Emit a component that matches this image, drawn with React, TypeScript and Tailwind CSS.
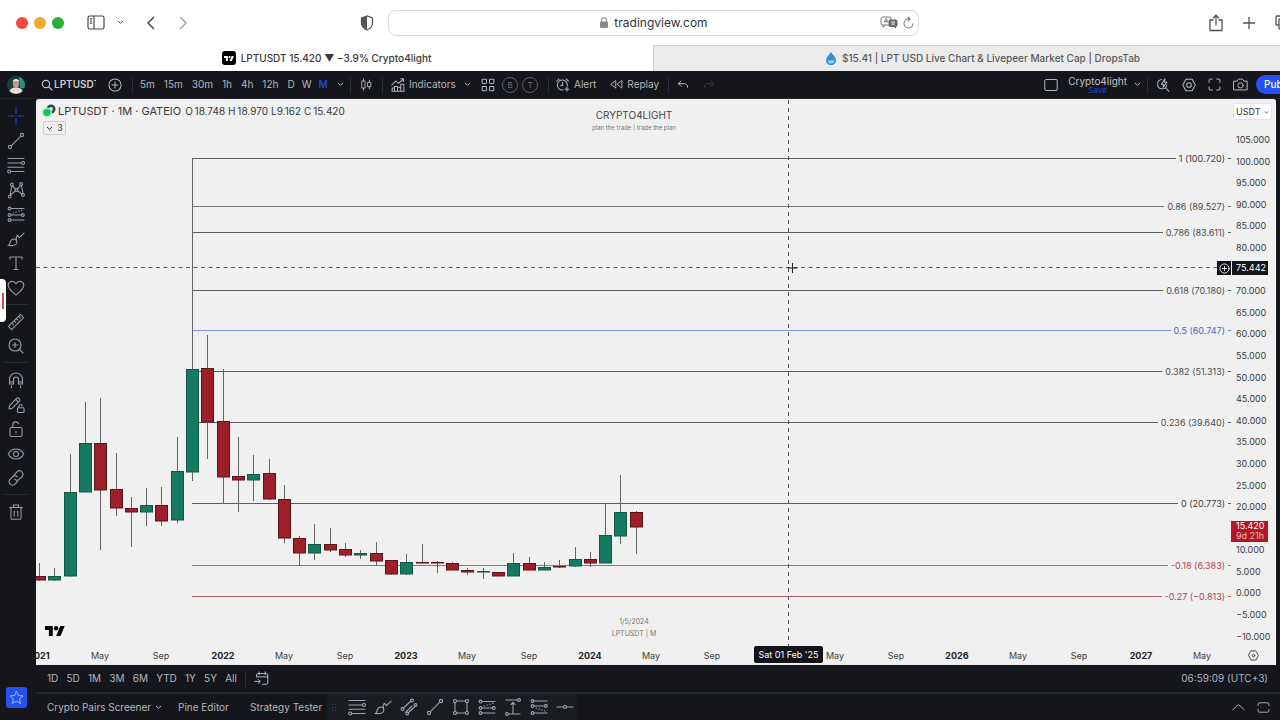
import React from "react";

type Tone = "up" | "down";
type Candle = [high: number, top: number, bottom: number, low: number, tone: Tone];

const ORIGIN_X = 36;
const ORIGIN_Y = 99;
const STEP = 15.3;
const FIRST_X = 39;

const yOf = (price: number) => Math.floor(139.7 + (105 - price) * 4.3217 - ORIGIN_Y);

const candles: Candle[] = [
  [563, 576, 580, 581, "down"],
  [568, 576, 580, 581, "up"],
  [454, 492, 576, 577, "up"],
  [402, 443, 492, 492, "up"],
  [398, 443, 490, 550, "down"],
  [453, 489, 508, 516, "down"],
  [497, 508, 512, 547, "down"],
  [488, 505, 512, 526, "up"],
  [487, 505, 521, 526, "down"],
  [437, 471, 520, 523, "up"],
  [158, 369, 472, 481, "up"],
  [335, 368, 422, 459, "down"],
  [369, 421, 477, 504, "down"],
  [437, 476, 480, 512, "down"],
  [455, 474, 480, 501, "up"],
  [459, 473, 499, 500, "down"],
  [485, 499, 538, 543, "down"],
  [536, 538, 553, 566, "down"],
  [524, 544, 553, 560, "up"],
  [528, 544, 550, 552, "down"],
  [543, 549, 555, 557, "down"],
  [550, 553, 555, 559, "up"],
  [542, 553, 561, 566, "down"],
  [560, 560, 574, 575, "down"],
  [554, 562, 574, 575, "up"],
  [544, 562, 563, 563, "down"],
  [561, 562, 563, 573, "down"],
  [562, 563, 570, 570, "down"],
  [568, 570, 572, 575, "down"],
  [568, 571, 572, 579, "up"],
  [572, 572, 576, 576, "down"],
  [553, 563, 576, 576, "up"],
  [557, 563, 570, 570, "down"],
  [562, 567, 570, 570, "up"],
  [560, 566, 567, 568, "down"],
  [547, 559, 566, 567, "up"],
  [552, 559, 563, 567, "down"],
  [503, 535, 563, 563, "up"],
  [475, 512, 536, 544, "up"],
  [511, 512, 527, 554, "down"],
];

const fibs: { level: string; price: number; color: string; text: string }[] = [
  { level: "1", price: 100.72, color: "#5c5c5c", text: "text-[#3c3c3c]" },
  { level: "0.86", price: 89.527, color: "#747474", text: "text-[#4c4c4c]" },
  { level: "0.786", price: 83.611, color: "#5c5c5c", text: "text-[#4c4c4c]" },
  { level: "0.618", price: 70.18, color: "#5c5c5c", text: "text-[#4c4c4c]" },
  { level: "0.5", price: 60.747, color: "#7d93ee", text: "text-[#4f64c8]" },
  { level: "0.382", price: 51.313, color: "#5c5c5c", text: "text-[#4c4c4c]" },
  { level: "0.236", price: 39.64, color: "#5c5c5c", text: "text-[#4c4c4c]" },
  { level: "0", price: 20.773, color: "#5c5c5c", text: "text-[#3c3c3c]" },
  { level: "-0.18", price: 6.383, color: "#c2606a", text: "text-[#ad4450]" },
  { level: "-0.27", price: -0.813, color: "#b5606a", text: "text-[#a34450]" },
];

const fmt = (n: number) => n.toFixed(3).replace("-", "−");
const prices = Array.from({ length: 24 }, (_, i) => 105 - i * 5);

const times = [
  "2021", "May", "Sep", "2022", "May", "Sep", "2023", "May", "Sep", "2024",
  "May", "Sep", "", "May", "Sep", "2026", "May", "Sep", "2027", "May",
];

function Ico({
  size = 18,
  sw = 1.1,
  className = "",
  children,
}: {
  size?: number;
  sw?: number;
  className?: string;
  children: React.ReactNode;
}) {
  return (
    <svg
      width={size}
      height={size}
      viewBox="0 0 18 18"
      fill="none"
      stroke="currentColor"
      strokeWidth={sw}
      strokeLinecap="round"
      strokeLinejoin="round"
      className={`shrink-0 ${className}`}
      aria-hidden="true"
    >
      {children}
    </svg>
  );
}

const Chevron = ({ className = "" }: { className?: string }) => (
  <svg width="7" height="5" viewBox="0 0 7 5" fill="none" stroke="currentColor" strokeWidth="1" className={`shrink-0 ${className}`} aria-hidden="true">
    <path d="M1 1l2.5 2.4L6 1" />
  </svg>
);

const TrendLine = (
  <>
    <circle cx="3" cy="15" r="1.6" />
    <circle cx="15" cy="3" r="1.6" />
    <path d="M4.2 13.8L13.8 4.2" />
  </>
);
const FibLines = (
  <>
    <path d="M1 2.5h16M1 7h13.5M1 11.2h16M3.6 15.5H17" />
    <circle cx="16" cy="7" r="1.5" />
    <circle cx="2.2" cy="15.5" r="1.5" />
  </>
);
const Pattern = (
  <>
    <path d="M3 14.5L4.8 4.8M5.6 4.8l3 3.4M10.4 8.2l3-3.8M14.4 4.4l1.6 8.4M3.6 14.2l5-4.6M10.4 9.6l4.6 3.6" />
    <circle cx="2.7" cy="15.6" r="1.4" />
    <circle cx="4.9" cy="3.5" r="1.4" />
    <circle cx="9.4" cy="9" r="1.4" />
    <circle cx="14.2" cy="3" r="1.4" />
    <circle cx="16" cy="14" r="1.4" />
  </>
);
const Position = (
  <>
    <path d="M4 3.5h13M4 10h10.5M4 15h13" />
    <path d="M6 8.200l9-3" strokeDasharray=".5 2.500" />
    <circle cx="2.5" cy="3.5" r="1.4" />
    <circle cx="2.5" cy="10" r="1.4" />
    <circle cx="15.8" cy="10" r="1.4" />
    <circle cx="2.5" cy="15" r="1.4" />
  </>
);
const Brush = (
  <>
    <path d="M1 15.500c2.400-.2 1.600-2.400 2.600-4.400 1.200-2.300 4.200-2.700 5.600-1 1.400 1.800.4 4.600-2 5.200-1.800.5-4 .3-6.200.2z" />
    <path d="M9.400 10.200c-.5-2 .2-4 .8-5 1 .2 1.700 1.600 2 2.600L17 3.200" />
  </>
);

const drawTools: { name: string; icon: React.ReactNode; active?: boolean }[] = [
  { name: "Cross", icon: <path d="M9 1v5.500M9 11.500V17M1 9h5.500M11.500 9H17M9 8.700v.6" />, active: true },
  { name: "Trend line", icon: TrendLine },
  { name: "Fib retracement", icon: FibLines },
  { name: "Patterns", icon: Pattern },
  { name: "Forecasting", icon: Position },
  { name: "Brush", icon: Brush },
  { name: "Text", icon: <path d="M3 5V3h12v2M9 3v12.500M7 15.500h4" /> },
  { name: "Icons", icon: <path d="M9 16C5 12.800 1.200 9.800 1.200 6.200 1.200 2 6.800 1 9 4.800 11.200 1 16.800 2 16.800 6.200 16.800 9.800 13 12.800 9 16z" /> },
];

const measureTools: { name: string; icon: React.ReactNode }[] = [
  { name: "Measure", icon: <path d="M1.400 13.400L13.400 1.400l3.200 3.200L4.600 16.600zM5 10l1.600 1.600M7.200 7.800l1.600 1.600M9.400 5.600L11 7.200M11.600 3.400L13.200 5" /> },
  { name: "Zoom in", icon: (<><circle cx="8" cy="8" r="6" /><path d="M12.500 12.500l3.500 3.500M8 5.600v4.800M5.600 8h4.800" /></>) },
];

const stateTools: { name: string; icon: React.ReactNode }[] = [
  { name: "Magnet", icon: <path d="M2.500 13V8.500a6.500 6.500 0 0 1 13 0V13h-4V8.500a2.500 2.500 0 0 0-5 0V13zM2.500 11h4M11.500 11h4M4.500 14.800v1.800M13.500 14.800v1.800" /> },
  { name: "Keep drawing", icon: (<><path d="M2 13l.5-3.300L10 2.200c1.300-1 3.800 1.300 2.600 2.700L5 12.400zM8.800 3.500l2.600 2.600" /><rect x="10.500" y="11.800" width="6.500" height="4.700" rx=".6" /><path d="M12 11.600v-1.500c0-2 3-2 3.200-.2" /></>) },
  { name: "Lock all drawings", icon: (<><rect x="3" y="7.500" width="12" height="9" rx="1.200" /><path d="M5.800 7.300V4.500c0-3.400 5-3.400 5.800-.7M9 11v2" /></>) },
  { name: "Hide all drawings", icon: (<><path d="M1.200 9c3.700-6.600 11.900-6.600 15.600 0-3.700 6.600-11.900 6.600-15.600 0z" /><circle cx="9" cy="9" r="2.500" /></>) },
  { name: "Sync drawings", icon: <path d="M7.500 5.500l2.800-2.800c3-2.800 7.400 1.500 4.800 4.800l-2.700 2.700c-1.300 1.200-3.400 1.200-4.600 0M10.500 12.500l-2.800 2.800C4.700 18 .3 13.800 2.900 10.500L5.600 7.800c1.300-1.200 3.400-1.200 4.600 0" /> },
];

const favTools: { name: string; icon: React.ReactNode }[] = [
  { name: "Fib levels", icon: FibLines },
  { name: "Paint", icon: Brush },
  { name: "Parallel channel", icon: (<><path d="M3.500 10l7.500-7M8 15l7.500-7M6 14l6-6" /><circle cx="2.500" cy="11" r="1.400" /><circle cx="12" cy="2.500" r="1.400" /><circle cx="7.200" cy="15.500" r="1.400" /><circle cx="15.500" cy="7" r="1.400" /></>) },
  { name: "Line", icon: TrendLine },
  { name: "Rectangle", icon: (<><rect x="3" y="3" width="12" height="12" /><g fill="#1a1c22"><circle cx="3" cy="3" r="1.500" /><circle cx="15" cy="3" r="1.500" /><circle cx="3" cy="15" r="1.500" /><circle cx="15" cy="15" r="1.500" /></g></>) },
  { name: "Long position", icon: Position },
  { name: "Price range", icon: (<><path d="M2 2h11M5 16h11M9 4.500V16M7 6.500l2-2.200 2 2.200" /><circle cx="15" cy="2" r="1.400" /><circle cx="3" cy="16" r="1.400" /></>) },
  { name: "Short position", icon: (<><path d="M4 3h13M4 8h10.500M4 15h13" /><path d="M6 10l9 3" strokeDasharray=".5 2.500" /><circle cx="2.500" cy="3" r="1.400" /><circle cx="2.500" cy="8" r="1.400" /><circle cx="15.800" cy="8" r="1.400" /><circle cx="2.500" cy="15" r="1.400" /></>) },
  { name: "Horizontal line", icon: (<><path d="M1 9h6.500M10.500 9H17" /><circle cx="9" cy="9" r="1.500" /></>) },
];

const TvMark = ({ className }: { className: string }) => (
  <svg viewBox="0 4 36 18" className={className} fill="currentColor" aria-hidden="true">
    <path d="M14 22H7V11H0V4h14v18zM28 22h-8l7.500-18h8L28 22z" />
    <circle cx="20" cy="8" r="4" />
  </svg>
);

function BrowserChrome() {
  return (
    <header className="bg-white text-[#4a4a4a]">
      <div className="flex h-[45px] items-center">
        <div className="flex flex-1 items-center pl-4">
          <div className="flex gap-[6px]">
            <button aria-label="Close" className="size-3 rounded-full bg-[#f4473f]" />
            <button aria-label="Minimize" className="size-3 rounded-full bg-[#f5a62c]" />
            <button aria-label="Full screen" className="size-3 rounded-full bg-[#25b237]" />
          </div>
          <button aria-label="Sidebar" className="ml-[23px] flex items-center">
            <svg width="18" height="15" viewBox="0 0 18 15" fill="none" stroke="currentColor" strokeWidth="1.200" aria-hidden="true">
              <rect x="1" y="1" width="16" height="13" rx="1.800" />
              <path d="M7 1v13M2.800 3.800h2.400M2.800 6h2.400M2.800 8.200h2.400" />
            </svg>
          </button>
          <button aria-label="Tab groups" className="ml-3"><Chevron /></button>
          <button aria-label="Back" className="ml-5">
            <svg width="12" height="16" viewBox="0 0 12 16" fill="none" stroke="currentColor" strokeWidth="1.500" aria-hidden="true"><path d="M10 2L4 8l6 6" /></svg>
          </button>
          <button aria-label="Forward" className="ml-5 text-[#a6a6a6]">
            <svg width="12" height="16" viewBox="0 0 12 16" fill="none" stroke="currentColor" strokeWidth="1.500" aria-hidden="true"><path d="M4 2l6 6-6 6" /></svg>
          </button>
          <button aria-label="Privacy report" className="mr-1 ml-auto">
            <svg width="14" height="16" viewBox="0 0 14 16" aria-hidden="true">
              <path d="M7 1L1.500 3v5c0 3.400 2.500 5.700 5.500 7 3-1.300 5.500-3.600 5.500-7V3z" fill="none" stroke="#555" strokeWidth="1.200" />
              <path d="M7 1L1.500 3v5c0 3.400 2.500 5.700 5.500 7z" fill="#555" />
            </svg>
          </button>
        </div>
        <div className="ml-[10px] flex h-[26px] w-[531px] items-center rounded-lg border border-[#dcdcdc] bg-white pr-1 pl-2">
          <span className="w-8" />
          <div className="flex flex-1 items-center justify-center gap-[6px] text-[12px] text-[#333]">
            <svg width="8" height="11" viewBox="0 0 8 11" aria-hidden="true">
              <rect x="0" y="4.500" width="8" height="6.500" rx="1" fill="#8a8a8a" />
              <path d="M1.700 5V3c0-3 4.600-3 4.600 0v2" fill="none" stroke="#8a8a8a" strokeWidth="1.100" />
            </svg>
            <span>tradingview.com</span>
          </div>
          <button aria-label="Translate">
            <svg width="18" height="13" viewBox="0 0 18 13" fill="none" aria-hidden="true">
              <rect x="1" y="1" width="10" height="8" rx="2" stroke="#777" />
              <path d="M3 9v2.500L5.500 9M4 7l2-4.500L8 7M4.700 5.500h2.600" stroke="#777" strokeWidth=".9" />
              <rect x="8.500" y="3.500" width="9" height="7.500" rx="2" fill="#666" />
              <path d="M14 10.500l2 2.200v-2.500z" fill="#666" />
              <path d="M11 6h4M13 5v1M11.300 9c2-.5 3-1.500 3.200-3M14.700 9c-1.600-.4-2.500-1.500-3-3" stroke="#fff" strokeWidth=".7" />
            </svg>
          </button>
          <button aria-label="Reload" className="ml-[5px]">
            <svg width="11" height="13" viewBox="0 0 11 13" fill="none" stroke="#777" strokeWidth="1.100" aria-hidden="true">
              <path d="M6.500 3H5.500a4.500 4.500 0 1 0 4.500 4.500M4.700.7L7 3 4.700 5.300" />
            </svg>
          </button>
        </div>
        <div className="flex flex-1 justify-end overflow-hidden">
          <div className="-mr-[9px] flex items-center gap-5 text-[#555]">
            <button aria-label="Share">
              <svg width="14" height="18" viewBox="0 0 14 18" fill="none" stroke="currentColor" strokeWidth="1.300" aria-hidden="true"><path d="M4.500 6H1v10.500h12V6H9.500M7 11.500V1.500M4 4.200l3-3 3 3" /></svg>
            </button>
            <button aria-label="New tab">
              <svg width="12" height="12" viewBox="0 0 12 12" fill="none" stroke="currentColor" strokeWidth="1.300" aria-hidden="true"><path d="M6 0v12M0 6h12" /></svg>
            </button>
            <button aria-label="Tab overview">
              <svg width="14" height="15" viewBox="0 0 14 15" fill="none" stroke="currentColor" strokeWidth="1.300" aria-hidden="true"><rect x="1" y="1" width="9" height="9" rx="1" /><rect x="4" y="4" width="9" height="10" rx="1" fill="#fff" /></svg>
            </button>
          </div>
        </div>
      </div>
      <nav className="flex h-[26px] text-[10px] font-medium" aria-label="Tabs">
        <a href="#chart" className="flex w-[653px] items-center justify-center gap-[5px] text-[#3a3a3a]">
          <span className="flex size-[14px] items-center justify-center rounded-[3px] bg-black text-white"><TvMark className="h-[5px] w-[10px]" /></span>
          LPTUSDT 15.420 ▼ −3.9% Crypto4light
        </a>
        <a href="#droptab" className="flex flex-1 items-center justify-center gap-[6px] border-t border-l border-[#cfcfcf] bg-[#ebebeb] pl-8 text-[#5a5a5a]">
          <svg width="10" height="13" viewBox="0 0 10 13" aria-hidden="true">
            <path d="M5 0C3 3 0 5.500 0 8.400 0 11 2.200 13 5 13s5-2 5-4.600C10 5.500 7 3 5 0z" fill="#2c8fdc" />
            <path d="M1.500 8c2 1.500 4-.8 7 .6-.3 4-6.500 4.200-7-.6z" fill="#9ed6fb" />
          </svg>
          $15.41 | LPT USD Live Chart &amp; Livepeer Market Cap | DropsTab
        </a>
      </nav>
    </header>
  );
}

const Sep = () => <span className="h-4 w-px shrink-0 bg-[#2c2e36]" />;

function TopBar() {
  return (
    <div className="flex h-7 items-center overflow-hidden border-b border-[#25272e] text-[10px] whitespace-nowrap text-[#b4b6bd]">
      <div className="flex w-[132px] shrink-0 items-center pl-[7px]">
        <button aria-label="Account">
          <svg width="18" height="18" viewBox="0 0 18 18" aria-hidden="true">
            <clipPath id="face"><circle cx="9" cy="9" r="9" /></clipPath>
            <g clipPath="url(#face)">
              <rect width="18" height="18" fill="#123f44" />
              <path d="M12 0h6v12h-5z" fill="#2a8f86" />
              <path d="M2 18c0-5 3-6.500 7-6.500s7 1.500 7 6.500z" fill="#e9dcd4" />
              <ellipse cx="9" cy="8" rx="3" ry="4" fill="#c99a86" />
              <path d="M5.500 6C6 2 12 2 12.500 6 11 4.500 7 4.500 5.500 6z" fill="#e9e9e9" />
            </g>
          </svg>
        </button>
        <button className="ml-4 flex items-center gap-px font-semibold text-[#c8cad0]">
          <Ico size={12} sw={1.700}><circle cx="7.500" cy="7.500" r="5.500" /><path d="M12 12l4.500 4.500" /></Ico>
          <span className="w-[42px] overflow-hidden text-left">LPTUSDT</span>
        </button>
        <button aria-label="Compare" className="ml-3">
          <Ico size={14} sw={1.300}><circle cx="9" cy="9" r="7.800" /><path d="M9 5.200v7.600M5.200 9h7.600" /></Ico>
        </button>
      </div>
      <Sep />
      <div className="flex w-[217px] shrink-0 items-center gap-[9px] pl-[7px]">
        {["5m", "15m", "30m", "1h", "4h", "12h"].map((t) => (
          <button key={t}>{t}</button>
        ))}
        <div className="flex items-center gap-[7px]">
          <button>D</button>
          <button>W</button>
          <button className="font-semibold text-[#2448c8]">M</button>
        </div>
        <button aria-label="More intervals"><Chevron /></button>
      </div>
      <Sep />
      <button aria-label="Bar style" className="flex w-[31px] shrink-0 justify-center">
        <Ico size={13} sw={1.300}><rect x="3" y="4" width="4" height="10" /><path d="M5 1v3M5 14v3M13 3v3M13 12v3" /><rect x="11" y="6" width="4" height="6" /></Ico>
      </button>
      <Sep />
      <div className="flex w-[165px] shrink-0 items-center pl-2">
        <button className="flex items-center gap-1">
          <Ico size={14} sw={1.300}><path d="M1 9l5-5 4 3 6-6M12.500 1H16v3.500M1.500 17v-4h3v4M4.500 17v-6h4v6M8.500 17v-5h4v5M12.500 17V8h4v9zM1 17h16" /></Ico>
          Indicators
        </button>
        <button aria-label="Favorite indicators" className="mr-[10px] ml-auto"><Chevron /></button>
        <button aria-label="Templates">
          <Ico size={14} sw={1.300}><rect x="1.500" y="1.500" width="5.500" height="5.500" rx=".8" /><rect x="11" y="1.500" width="5.500" height="5.500" rx=".8" /><rect x="1.500" y="11" width="5.500" height="5.500" rx=".8" /><rect x="11" y="11" width="5.500" height="5.500" rx=".8" /></Ico>
        </button>
        <button className="ml-[7px] flex size-4 items-center justify-center rounded-full border border-[#5a5c64] text-[8px] text-[#6e7078]">B</button>
        <button className="mr-[10px] ml-1 flex size-4 items-center justify-center rounded-full border border-[#5a5c64] text-[8px] text-[#6e7078]">T</button>
      </div>
      <Sep />
      <div className="flex w-[119px] shrink-0 items-center pl-[7px]">
        <button className="flex items-center gap-1">
          <Ico size={14} sw={1.300}><path d="M14.500 10.500A6.500 6.500 0 1 0 9 15.500M8.500 5.500v4H6M1 4l3-3M13 1l3 3M14 12v5M11.500 14.500h5" /></Ico>
          Alert
        </button>
        <button className="ml-[14px] flex items-center gap-1">
          <Ico size={13} sw={1.300}><path d="M8 4v10L1.500 9zM16.500 4v10L10 9z" /></Ico>
          Replay
        </button>
      </div>
      <Sep />
      <div className="flex items-center gap-[14px] pl-[8px]">
        <button aria-label="Undo"><Ico size={12} sw={1.500}><path d="M6 3L2 7l4 4M2 7h9c3 0 5 2 5 5.500" /></Ico></button>
        <button aria-label="Redo" className="text-[#33353d]"><Ico size={12} sw={1.500}><path d="M12 3l4 4-4 4M16 7H7c-3 0-5 2-5 5.500" /></Ico></button>
      </div>
      <div className="-mr-[30px] ml-auto flex shrink-0 items-center">
        <button aria-label="Layout" className="mr-[10px]"><Ico size={14} sw={1.300}><rect x="1" y="2" width="16" height="14" rx="2" /></Ico></button>
        <button className="flex flex-col items-center pt-px">
          <span className="text-[10px] leading-[10px] text-[#c0c2c8]">Crypto4light</span>
          <span className="text-[8px] leading-[8px] text-[#2448c8]">Save</span>
        </button>
        <button aria-label="Manage layouts" className="mr-[6px] ml-[7px]"><Chevron /></button>
        <Sep />
        <div className="ml-2 flex items-center gap-3">
          <button aria-label="Quick search"><Ico size={14} sw={1.300}><path d="M7 2a6 6 0 1 0 7 7M12 12.500l4.500 4.500M11.500 1L7 8h3l-1 4 5-6.500h-3z" /></Ico></button>
          <button aria-label="Settings"><Ico size={14} sw={1.300}><path d="M5 1.500h8L17 9l-4 7.500H5L1 9z" /><circle cx="9" cy="9" r="3" /></Ico></button>
          <button aria-label="Fullscreen"><Ico size={13} sw={1.400}><path d="M1.500 6V3.500a2 2 0 0 1 2-2H6M12 1.500h2.500a2 2 0 0 1 2 2V6M16.500 12v2.500a2 2 0 0 1-2 2H12M6 16.500H3.500a2 2 0 0 1-2-2V12" /></Ico></button>
          <button aria-label="Snapshot"><Ico size={15} sw={1.200}><path d="M1 5h4l1.500-2.500h5L13 5h4v10.500H1z" /><circle cx="9" cy="10" r="3.200" /></Ico></button>
        </div>
        <button className="ml-2 h-[19px] w-[54px] rounded-full bg-[#2451f0] pl-2 text-left text-[10px] font-medium text-white">Publish</button>
      </div>
    </div>
  );
}

function ToolList({ items, className }: { items: { name: string; icon: React.ReactNode; active?: boolean }[]; className: string }) {
  return (
    <div className={`flex flex-col items-center justify-between ${className}`}>
      {items.map((t) => (
        <button key={t.name} aria-label={t.name} className={t.active ? "text-[#2346c4]" : "text-[#9a9ca4]"}>
          <Ico>{t.icon}</Ico>
        </button>
      ))}
    </div>
  );
}

function SideBar() {
  return (
    <aside className="relative flex w-9 shrink-0 flex-col items-center pt-2 pr-1">
      <ToolList items={drawTools} className="h-[190px]" />
      <span className="mt-[7px] h-px w-6 bg-[#2c2e36]" />
      <ToolList items={measureTools} className="mt-[8px] h-[42px]" />
      <span className="mt-[7px] h-px w-6 bg-[#2c2e36]" />
      <ToolList items={stateTools} className="mt-[8px] h-[116px]" />
      <span className="mt-[7px] h-px w-6 bg-[#2c2e36]" />
      <ToolList
        items={[{ name: "Remove objects", icon: <path d="M2.500 4.500h13M6.500 4.500V2h5v2.500M4 4.500V15c0 .8.500 1.300 1.300 1.300h7.400c.8 0 1.300-.5 1.300-1.300V4.500M7.300 8v5M10.700 8v5" /> }]}
        className="mt-[8px] h-[18px]"
      />
      <button aria-label="Favorites toolbar" className="mt-auto mb-[12px] flex size-[21px] items-center justify-center rounded-[3px] bg-[#2451f0] text-[#a9bcff]">
        <Ico size={15}><path d="M9 1.500l2.300 5 5.400.6-4 3.700 1.100 5.400L9 13.500l-4.800 2.700 1.100-5.400-4-3.700 5.400-.6z" /></Ico>
      </button>
      <span className="absolute top-[180px] left-0 flex h-[43px] w-[6px] items-center justify-center rounded-r-[4px] bg-white">
        <span className="h-4 w-[2px] bg-[#cf4a4e]" />
      </span>
    </aside>
  );
}

function Plot() {
  return (
    <div className="relative h-[547px] min-w-0 flex-1 overflow-hidden">
      <svg width="100%" height="100%" className="block" aria-label="LPTUSDT monthly candles">
        {fibs.map((f) => {
          const y = yOf(f.price) + 0.5;
          return <line key={f.level} x1={156} x2="100%" y1={y} y2={y} stroke={f.color} />;
        })}
        {candles.map(([high, top, bottom, low, tone], i) => {
          const cx = Math.round(FIRST_X + i * STEP - ORIGIN_X);
          return (
            <g key={i}>
              <line x1={cx + 0.5} x2={cx + 0.5} y1={high - ORIGIN_Y} y2={low - ORIGIN_Y} stroke="#646464" />
              <rect
                x={cx - 5.5}
                y={top - ORIGIN_Y + 0.5}
                width={12}
                height={Math.max(bottom - top - 0.5, 0.5)}
                fill={tone === "up" ? "#167a60" : "#9d1f2a"}
                stroke={tone === "up" ? "#0f5a47" : "#5e1219"}
              />
            </g>
          );
        })}
        <line x1="0" x2="100%" y1="168.500" y2="168.500" stroke="#555" strokeDasharray="4 3.500" />
        <line x1="752.500" x2="752.500" y1="1" y2="547" stroke="#555" strokeDasharray="4 4" />
        <path d="M756.500 164v10M751.500 169h10" stroke="#222" />
      </svg>

      {fibs.map((f) => (
        <span
          key={f.level}
          className={`absolute right-[3px] -translate-y-1/2 bg-[#f0f0f0] px-[3px] text-[9px] leading-3 whitespace-nowrap ${f.text}`}
          style={{ top: yOf(f.price) + 1 }}
        >
          {f.level} ({fmt(f.price)})
        </span>
      ))}
      <button aria-label="Add alert at price" className="absolute top-[162px] right-0 flex h-[14px] w-[14px] items-center justify-center bg-[#131419] text-white">
        <Ico size={11} sw={1.400}><circle cx="9" cy="9" r="7.500" /><path d="M9 5.500v7M5.500 9h7" /></Ico>
      </button>

      <div className="absolute top-[5px] left-[6px] text-[#3a3a3a]">
        <div className="flex h-[14px] items-center whitespace-nowrap">
          <svg width="14" height="14" viewBox="0 0 14 14" aria-hidden="true">
            <circle cx="9" cy="5" r="4.500" fill="#264b52" />
            <circle cx="9" cy="5" r="2" fill="#d7e5e3" />
            <circle cx="5" cy="8.500" r="5" fill="#a5ecc2" />
            <circle cx="5" cy="8.500" r="3.600" fill="#19c15b" />
          </svg>
          <span className="ml-[2px] text-[11px]">LPTUSDT · 1M · GATEIO</span>
          <span className="ml-1 flex gap-[3px] text-[10px]">
            <span>O&thinsp;18.748</span>
            <span>H&thinsp;18.970</span>
            <span>L9.162</span>
            <span>C&thinsp;15.420</span>
          </span>
        </div>
        <button className="mt-[3px] ml-px flex h-[14px] w-[23px] items-center justify-center gap-1 rounded-[2px] border border-[#cfd0d4] text-[9px]">
          <Chevron /> 3
        </button>
      </div>

      <div className="absolute top-[10px] left-[598px] flex -translate-x-1/2 flex-col items-center whitespace-nowrap">
        <span className="text-[10px] leading-3 text-[#444]">CRYPTO4LIGHT</span>
        <span className="mt-[3px] text-[6px] leading-2 text-[#777]">plan the trade | trade the plan</span>
      </div>
      <div className="absolute top-[517px] left-[598px] flex -translate-x-1/2 flex-col items-center text-[7px] leading-3 whitespace-nowrap text-[#777]">
        <span>1/5/2024</span>
        <span>LPTUSDT | M</span>
      </div>
      <TvMark className="absolute top-[527px] left-[9px] h-[10px] w-[20px] text-black" />
    </div>
  );
}

function PriceAxis() {
  return (
    <div className="relative w-11 shrink-0 text-[9px] text-[#3c3c3c]">
      <label className="sr-only" htmlFor="currency">Currency</label>
      <div className="relative mt-1 ml-[2px] h-[17px] w-[39px] rounded-[2px] border border-[#e2e2e2] bg-white">
        <select id="currency" className="block h-full w-full appearance-none bg-transparent pl-[2px] text-[9px] leading-[15px] text-[#333]">
          <option>USDT</option>
        </select>
        <Chevron className="pointer-events-none absolute top-[6px] right-px scale-75" />
      </div>
      <ul className="mt-[14px] flex h-[509px] flex-col justify-between pl-[5px] leading-3">
        {prices.map((p) => (
          <li key={p}>{p === 75 || p === 15 ? "\u00a0" : fmt(p)}</li>
        ))}
      </ul>
      <span className="absolute top-[162px] left-px h-[14px] w-9 bg-[#131419] pl-1 leading-[14px] text-white">75.442</span>
      <span className="absolute top-[422px] left-0 flex h-[21px] w-[37px] flex-col bg-[#b01825] pl-[5px] leading-[10px] text-white">
        15.420
        <span className="text-[#f0b4b8]">9d 21h</span>
      </span>
    </div>
  );
}

function TimeAxis() {
  return (
    <div className="relative flex h-[19px] items-center text-[9px] text-[#3c3c3c]">
      {times.map((t, i) => (
        <span
          key={i}
          className={`absolute top-[4px] -translate-x-1/2 leading-3 ${t.startsWith("20") ? "font-bold text-[#222]" : ""}`}
          style={{ left: Math.round(FIRST_X + i * 61.2 - ORIGIN_X) }}
        >
          {t}
        </span>
      ))}
      <span className="absolute top-0 left-[718px] h-[17px] w-[69px] rounded-[2px] bg-[#131419] text-center leading-[17px] whitespace-nowrap text-white">Sat 01 Feb '25</span>
      <button aria-label="Axis settings" className="mr-4 ml-auto">
        <Ico size={11} sw={1.500}><path d="M5 1.500h8L17 9l-4 7.500H5L1 9z" /><circle cx="9" cy="9" r="2" /></Ico>
      </button>
    </div>
  );
}

function Footer() {
  return (
    <footer className="bg-[#15161c] text-[10px] whitespace-nowrap text-[#b4b6bd]">
      <div className="flex h-[29px] items-center border-b-2 border-[#25272e] pr-3 pl-[11px]">
        <div className="flex w-[198px] items-center justify-between pr-2">
          {["1D", "5D", "1M", "3M", "6M", "YTD", "1Y", "5Y", "All"].map((r) => (
            <button key={r}>{r}</button>
          ))}
        </div>
        <Sep />
        <button aria-label="Go to date" className="ml-2">
          <Ico size={15} sw={1.200}><path d="M3 7V4.500c0-.8.6-1.400 1.400-1.400h10.700c.8 0 1.400.6 1.400 1.400v10c0 .8-.6 1.400-1.400 1.400H10M3 7h13.500M6 1v3.500M13.500 1v3.500M1 12.500h6.500M5 10l2.500 2.500L5 15" /></Ico>
        </button>
        <button className="ml-auto">06:59:09 (UTC+3)</button>
      </div>
      <div className="flex h-[26px] items-center pr-[10px] pl-[11px]">
        <button className="w-[104px] text-left">Crypto Pairs Screener</button>
        <button aria-label="Screener menu" className="ml-1"><Chevron /></button>
        <button className="ml-4 w-[56px] text-left">Pine Editor</button>
        <button className="ml-4 w-[76px] text-left">Strategy Tester</button>
        <div className="ml-px flex h-[26px] w-[250px] items-center bg-[#1a1c22] pr-[3px] pl-[5px] text-[#a2a4ac]">
          <span className="mr-3 grid grid-cols-2 gap-[2px]">
            {[0, 1, 2, 3, 4, 5].map((d) => (
              <span key={d} className="size-px bg-[#44464e]" />
            ))}
          </span>
          <div className="flex flex-1 items-center justify-between">
            {favTools.map((t) => (
              <button key={t.name} aria-label={t.name}><Ico>{t.icon}</Ico></button>
            ))}
          </div>
        </div>
        <div className="ml-auto flex items-center gap-3">
          <button aria-label="Expand panel"><Ico size={13} sw={1.300}><path d="M1 12l8-7 8 7" /></Ico></button>
          <button aria-label="Maximize panel"><Ico size={13} sw={1.300}><path d="M1.500 6.500v-2a2 2 0 0 1 2-2h11a2 2 0 0 1 2 2v2M16.500 11.500v2a2 2 0 0 1-2 2h-11a2 2 0 0 1-2-2v-2" /></Ico></button>
        </div>
      </div>
    </footer>
  );
}

export default function App() {
  return (
    <div className="flex min-h-screen flex-col overflow-hidden bg-[#15161c] font-['Inter','Liberation_Sans',sans-serif]">
      <BrowserChrome />
      <TopBar />
      <main className="flex flex-1">
        <SideBar />
        <div className="flex min-w-0 flex-1 flex-col">
          <section id="chart" className="mr-1 overflow-hidden rounded-t-[3px] border-r border-white bg-[#f0f0f0]">
            <div className="flex">
              <Plot />
              <PriceAxis />
            </div>
            <TimeAxis />
          </section>
          <Footer />
        </div>
      </main>
    </div>
  );
}
